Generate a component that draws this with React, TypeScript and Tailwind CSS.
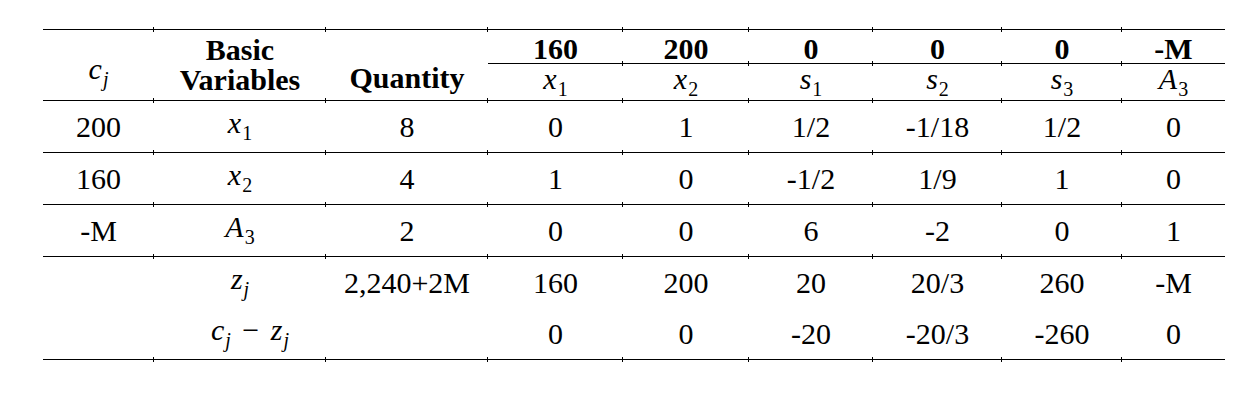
import React from 'react';

const cols = 'grid-cols-[111px_172px_162px_135px_126px_124px_129px_120px_103px]';

// variable in math italic with optional subscript
const V = ({ v, sub, italicSub }: { v: string; sub?: string; italicSub?: boolean }) => (
  <span className="whitespace-nowrap">
    <span className="italic">{v}</span>
    {sub && (
      <span className={`relative top-[7px] ml-[1px] text-[20px] ${italicSub ? 'italic' : ''}`}>{sub}</span>
    )}
  </span>
);

const Tick = ({ bottom }: { bottom?: boolean }) => (
  <span className={`absolute left-[-1px] h-[5px] w-px bg-black ${bottom ? 'bottom-[-3px]' : 'top-[-3px]'}`} />
);

const body: { cj: React.ReactNode; basic: React.ReactNode; qty: string; vals: string[] }[] = [
  { cj: '200', basic: <V v="x" sub="1" />, qty: '8', vals: ['0', '1', '1/2', '-1/18', '1/2', '0'] },
  { cj: '160', basic: <V v="x" sub="2" />, qty: '4', vals: ['1', '0', '-1/2', '1/9', '1', '0'] },
  { cj: '-M', basic: <V v="A" sub="3" />, qty: '2', vals: ['0', '0', '6', '-2', '0', '1'] },
];

const heads = [
  { top: '160', v: 'x', sub: '1' },
  { top: '200', v: 'x', sub: '2' },
  { top: '0', v: 's', sub: '1' },
  { top: '0', v: 's', sub: '2' },
  { top: '0', v: 's', sub: '3' },
  { top: '-M', v: 'A', sub: '3' },
];

export default function App() {
  return (
    <div className="w-[1247px] h-[406px] bg-white pt-[29px] pl-[43px] font-['Liberation_Serif',serif] text-[30px] text-black leading-none">
      <div className="w-[1182px]">
        {/* header */}
        <div className={`grid ${cols} grid-rows-[34px_36px] border-t-[1.5px] border-black`}>
          <div className="row-span-2 flex items-center justify-center pt-[8px]">
            <V v="c" sub="j" italicSub />
          </div>
          <div className="relative row-span-2 flex flex-col items-center justify-center pb-[1px] font-bold leading-[30px]">
            <Tick />
            <span>Basic</span>
            <span>Variables</span>
          </div>
          <div className="relative row-span-2 flex items-center justify-center pt-[26px] font-bold">
            <Tick />
            Quantity
          </div>
          {heads.map((h, i) => (
            <div key={'t' + i} className="relative flex items-center justify-center border-b-[1.5px] border-black pt-[4px] font-bold">
              <Tick />
              {h.top}
            </div>
          ))}
          {heads.map((h, i) => (
            <div key={'v' + i} className="relative flex items-center justify-center pb-[6px]">
              {i > 0 && <Tick />}
              <V v={h.v} sub={h.sub} />
            </div>
          ))}
        </div>

        {/* body rows */}
        {body.map((r, ri) => (
          <div key={ri} className={`grid ${cols} h-[52px] border-t-[1.5px] border-black`}>
            {[r.cj, r.basic, r.qty, ...r.vals].map((c, ci) => (
              <div key={ci} className={`relative flex items-center justify-center ${ci === 1 ? 'pb-[8px]' : ''}`}>
                {ci > 0 && <Tick />}
                {c}
              </div>
            ))}
          </div>
        ))}

        {/* totals */}
        <div className="border-y-[1.5px] border-black">
          <div className={`grid ${cols} h-[51px]`}>
            {['', <V v="z" sub="j" italicSub />, '2,240+2M', '160', '200', '20', '20/3', '260', '-M'].map((c, ci) => (
              <div key={ci} className={`relative flex items-center justify-center ${ci === 1 ? 'pb-[8px]' : ''}`}>
                {ci > 0 && <Tick />}
                {c}
              </div>
            ))}
          </div>
          <div className={`grid ${cols} h-[51px]`}>
            {[
              '',
              <span className="pl-[20px] whitespace-nowrap">
                <V v="c" sub="j" italicSub /> <span className="mx-[4px]">−</span> <V v="z" sub="j" italicSub />
              </span>,
              '',
              '0',
              '0',
              '-20',
              '-20/3',
              '-260',
              '0',
            ].map((c, ci) => (
              <div key={ci} className={`relative flex items-center justify-center ${ci === 1 ? 'pb-[8px]' : ''}`}>
                {ci > 0 && <Tick bottom />}
                {c}
              </div>
            ))}
          </div>
        </div>
      </div>
    </div>
  );
}
